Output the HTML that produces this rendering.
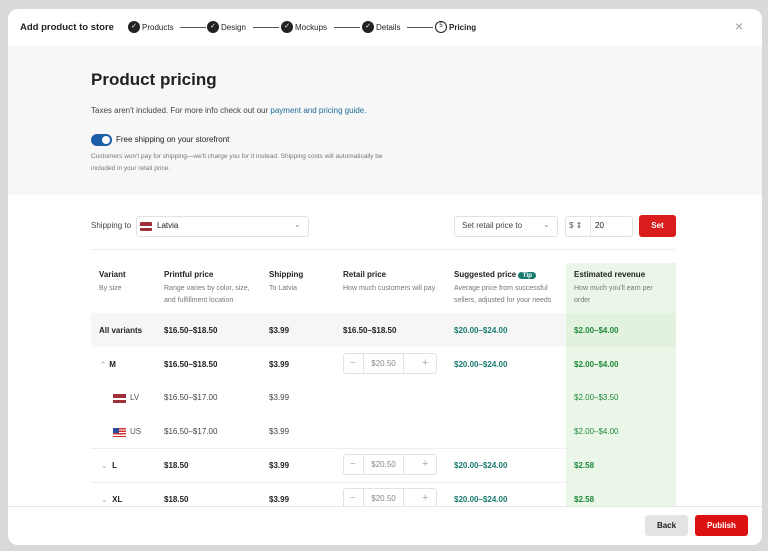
<!DOCTYPE html>
<html><head><meta charset="utf-8"><style>
*{margin:0;padding:0;box-sizing:border-box}
body{width:768px;height:551px;background:#d9d9d9;font-family:"Liberation Sans",sans-serif;color:#222;position:relative;overflow:hidden;font-size:8px}
.a{position:absolute;white-space:nowrap}
#m{position:absolute;left:8px;top:9px;width:754px;height:536px;background:#fff;border-radius:10px;overflow:hidden}
.b{font-weight:bold}
.c{width:12px;height:12px;border-radius:50%;background:#222;color:#fff;font-size:7px;text-align:center;line-height:12px}
.ln{height:1px;background:#555}
.g{color:#1a7a70;font-weight:bold}
.gr{color:#1f8a3a;font-weight:bold}
.s{color:#777;font-size:7px;line-height:12px}
.box{border:1px solid #e2e2e2;border-radius:3px;background:#fff}
.hl{height:1px;background:#eee}
</style></head><body>
<div id="m">
<div class="a b" style="left:12px;top:13px;font-size:9.5px">Add product to store</div>
<div class="a c" style="left:120px;top:12px">✓</div><div class="a" style="left:134px;top:14px">Products</div><div class="a ln" style="left:172px;top:18px;width:26px"></div>
<div class="a c" style="left:199px;top:12px">✓</div><div class="a" style="left:213px;top:14px">Design</div><div class="a ln" style="left:245px;top:18px;width:26px"></div>
<div class="a c" style="left:273px;top:12px">✓</div><div class="a" style="left:287px;top:14px">Mockups</div><div class="a ln" style="left:326px;top:18px;width:26px"></div>
<div class="a c" style="left:354px;top:12px">✓</div><div class="a" style="left:368px;top:14px">Details</div><div class="a ln" style="left:399px;top:18px;width:26px"></div>
<div class="a c" style="left:427px;top:12px;background:#fff;border:1.3px solid #222;color:#222;line-height:9px;font-size:6px">5</div><div class="a b" style="left:441px;top:14px">Pricing</div>
<div class="a" style="left:727px;top:9px;font-size:14px;color:#999">×</div>
<div class="a" style="left:0;top:37px;width:754px;height:149px;background:#f7f7f7"></div>
<div class="a b" style="left:83px;top:61px;font-size:17px">Product pricing</div>
<div class="a" style="left:83px;top:97px;color:#444">Taxes aren't included. For more info check out our <span style="color:#1c6b96">payment and pricing guide.</span></div>
<div class="a" style="left:83px;top:125px;width:21px;height:12px;border-radius:6px;background:#1c5ea8"><div style="position:absolute;right:2px;top:2px;width:8px;height:8px;border-radius:50%;background:#fff"></div></div>
<div class="a" style="left:108px;top:126px">Free shipping on your storefront</div>
<div class="a s" style="left:83px;top:142px;font-size:6.5px">Customers won't pay for shipping—we'll charge you for it instead. Shipping costs will automatically be<br>included in your retail price.</div>
<div class="a" style="left:83px;top:212px;color:#444">Shipping to</div>
<div class="a box" style="left:128px;top:207px;width:173px;height:21px"></div>
<div class="a" style="left:132px;top:213px;width:12px;height:9px;background:#9e3039;border-radius:1px"><div style="margin-top:3.5px;height:2px;background:#fff"></div></div>
<div class="a" style="left:149px;top:212px">Latvia</div><div class="a" style="left:286px;top:211px;color:#888;font-size:8px">⌄</div>
<div class="a box" style="left:446px;top:207px;width:104px;height:21px"></div><div class="a" style="left:454px;top:212px;color:#444">Set retail price to</div><div class="a" style="left:535px;top:211px;color:#888">⌄</div>
<div class="a box" style="left:557px;top:207px;width:68px;height:21px"></div><div class="a" style="left:582px;top:207px;width:1px;height:21px;background:#e2e2e2"></div>
<div class="a" style="left:561px;top:212px;color:#555">$ ⇕</div><div class="a" style="left:587px;top:212px">20</div>
<div class="a b" style="left:631px;top:206px;width:37px;height:22px;background:#d91c1c;color:#fff;border-radius:3px;text-align:center;line-height:22px">Set</div>
<div class="a hl" style="left:83px;top:240px;width:585px"></div>
<div class="a" style="left:558px;top:254px;width:110px;height:244px;background:#eaf6e8"></div>
<div class="a" style="left:83px;top:304px;width:475px;height:34px;background:#f6f6f6"></div>
<div class="a" style="left:558px;top:304px;width:110px;height:34px;background:#e2f2df"></div>
<div class="a b" style="left:91px;top:261px">Variant</div><div class="a s" style="left:91px;top:274px">By size</div>
<div class="a b" style="left:156px;top:261px">Printful price</div><div class="a s" style="left:156px;top:274px">Range varies by color, size,<br>and fulfillment location</div>
<div class="a b" style="left:261px;top:261px">Shipping</div><div class="a s" style="left:261px;top:274px">To Latvia</div>
<div class="a b" style="left:335px;top:261px">Retail price</div><div class="a s" style="left:335px;top:274px">How much customers will pay</div>
<div class="a b" style="left:446px;top:261px">Suggested price <span style="background:#1a7a70;color:#fff;border-radius:6px;padding:0 4px;font-size:6.5px">Tip</span></div><div class="a s" style="left:446px;top:274px">Average price from successful<br>sellers, adjusted for your needs</div>
<div class="a b" style="left:566px;top:261px">Estimated revenue</div><div class="a s" style="left:566px;top:274px">How much you'll earn per<br>order</div>
<div class="a b" style="left:91px;top:317px">All variants</div><div class="a b" style="left:156px;top:317px">$16.50–$18.50</div><div class="a b" style="left:261px;top:317px">$3.99</div><div class="a b" style="left:335px;top:317px">$16.50–$18.50</div><div class="a g" style="left:446px;top:317px">$20.00–$24.00</div><div class="a gr" style="left:566px;top:317px">$2.00–$4.00</div>
<div class="a b" style="left:93px;top:351px"><span style="color:#aaa;font-weight:normal">^</span>&nbsp; M</div><div class="a b" style="left:156px;top:351px">$16.50–$18.50</div><div class="a b" style="left:261px;top:351px">$3.99</div><div class="a g" style="left:446px;top:351px">$20.00–$24.00</div><div class="a gr" style="left:566px;top:351px">$2.00–$4.00</div>
<div class="a" style="left:105px;top:385px;width:13px;height:9px;background:#9e3039"><div style="margin-top:3.5px;height:2px;background:#fff"></div></div><div class="a" style="left:122px;top:384px;color:#555">LV</div><div class="a" style="left:156px;top:384px;color:#444">$16.50–$17.00</div><div class="a" style="left:261px;top:384px;color:#444">$3.99</div><div class="a" style="left:566px;top:384px;color:#1f8a3a">$2.00–$3.50</div>
<div class="a" style="left:105px;top:419px;width:13px;height:9px;background:repeating-linear-gradient(#c33 0 1.3px,#fff 1.3px 2.6px)"><div style="width:6px;height:5px;background:#2b4b9b"></div></div><div class="a" style="left:122px;top:418px;color:#555">US</div><div class="a" style="left:156px;top:418px;color:#444">$16.50–$17.00</div><div class="a" style="left:261px;top:418px;color:#444">$3.99</div><div class="a" style="left:566px;top:418px;color:#1f8a3a">$2.00–$4.00</div>
<div class="a hl" style="left:83px;top:439px;width:585px"></div>
<div class="a b" style="left:93px;top:452px"><span style="color:#aaa;font-weight:normal">⌄</span>&nbsp; L</div><div class="a b" style="left:156px;top:452px">$18.50</div><div class="a b" style="left:261px;top:452px">$3.99</div><div class="a g" style="left:446px;top:452px">$20.00–$24.00</div><div class="a gr" style="left:566px;top:452px">$2.58</div>
<div class="a hl" style="left:83px;top:473px;width:585px"></div>
<div class="a b" style="left:93px;top:486px"><span style="color:#aaa;font-weight:normal">⌄</span>&nbsp; XL</div><div class="a b" style="left:156px;top:486px">$18.50</div><div class="a b" style="left:261px;top:486px">$3.99</div><div class="a g" style="left:446px;top:486px">$20.00–$24.00</div><div class="a gr" style="left:566px;top:486px">$2.58</div>
<div class="a box" style="left:335px;top:344px;width:94px;height:21px"></div><div class="a" style="left:355px;top:344px;width:41px;height:21px;border-left:1px solid #e2e2e2;border-right:1px solid #e2e2e2;text-align:center;line-height:21px;color:#888">$20.50</div><div class="a" style="left:342px;top:349px;color:#aaa;font-size:10px">−</div><div class="a" style="left:414px;top:348px;color:#aaa;font-size:11px">+</div>
<div class="a box" style="left:335px;top:445px;width:94px;height:21px"></div><div class="a" style="left:355px;top:445px;width:41px;height:21px;border-left:1px solid #e2e2e2;border-right:1px solid #e2e2e2;text-align:center;line-height:21px;color:#888">$20.50</div><div class="a" style="left:342px;top:450px;color:#aaa;font-size:10px">−</div><div class="a" style="left:414px;top:449px;color:#aaa;font-size:11px">+</div>
<div class="a box" style="left:335px;top:479px;width:94px;height:21px"></div><div class="a" style="left:355px;top:479px;width:41px;height:21px;border-left:1px solid #e2e2e2;border-right:1px solid #e2e2e2;text-align:center;line-height:21px;color:#888">$20.50</div><div class="a" style="left:342px;top:484px;color:#aaa;font-size:10px">−</div><div class="a" style="left:414px;top:483px;color:#aaa;font-size:11px">+</div>
<div class="a" style="left:0;top:497px;width:754px;height:39px;background:#fff;border-top:1px solid #e5e5e5"></div>
<div class="a b" style="left:637px;top:506px;width:43px;height:21px;background:#e3e3e3;border-radius:3px;text-align:center;line-height:21px">Back</div>
<div class="a b" style="left:687px;top:506px;width:53px;height:21px;background:#dd1111;color:#fff;border-radius:3px;text-align:center;line-height:21px">Publish</div>
</div>
</body></html>
